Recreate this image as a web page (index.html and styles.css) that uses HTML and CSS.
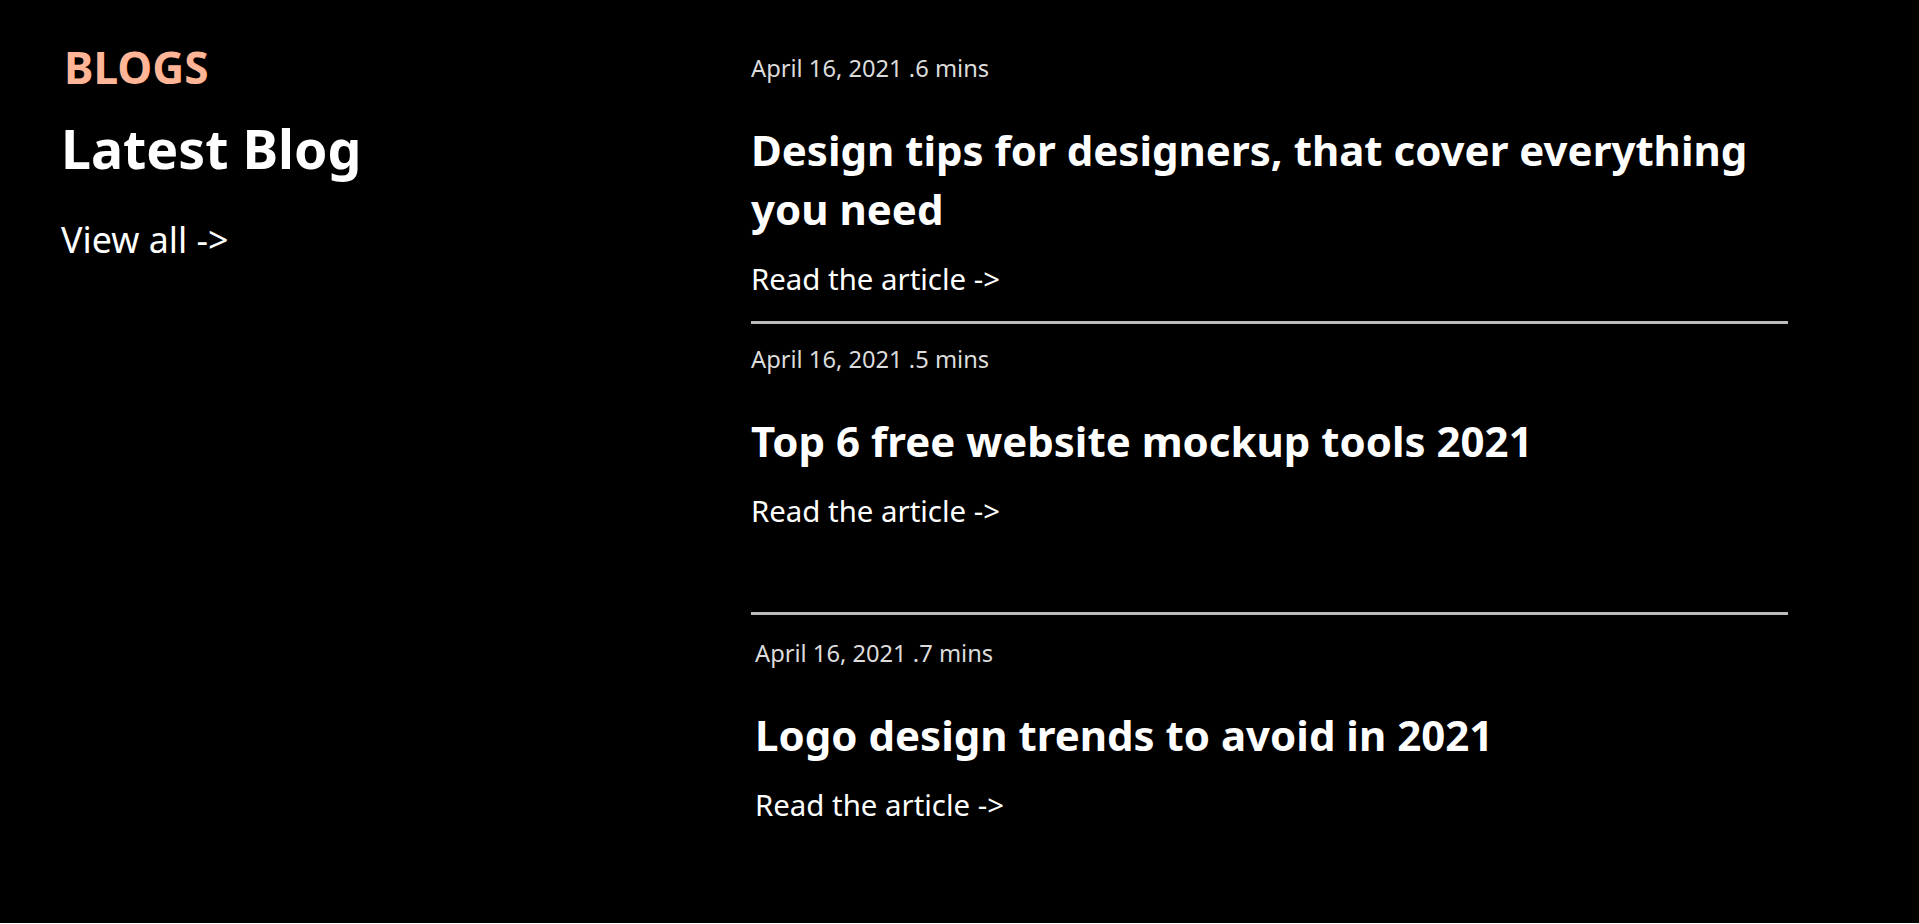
FILE: index.html
```html
<!DOCTYPE html>
<html lang="en">
<head>
<meta charset="utf-8">
<title>Blogs</title>
<link rel="stylesheet" href="styles.css">
</head>
<body>
<section class="blog">
  <div class="intro">
    <p class="eyebrow">BLOGS</p>
    <h2 class="intro-title">Latest Blog</h2>
    <a class="view-all" href="#">View all -&gt;</a>
  </div>
  <div class="posts">
    <article class="post">
      <p class="post-meta">April 16, 2021 .6 mins</p>
      <h3 class="post-title">Design tips for designers, that cover everything you need</h3>
      <a class="post-link" href="#">Read the article -&gt;</a>
    </article>
    <article class="post">
      <p class="post-meta">April 16, 2021 .5 mins</p>
      <h3 class="post-title">Top 6 free website mockup tools 2021</h3>
      <a class="post-link" href="#">Read the article -&gt;</a>
    </article>
    <article class="post post-last">
      <p class="post-meta">April 16, 2021 .7 mins</p>
      <h3 class="post-title">Logo design trends to avoid in 2021</h3>
      <a class="post-link" href="#">Read the article -&gt;</a>
    </article>
  </div>
</section>
</body>
</html>
```
FILE: styles.css
```css
html, body {
  margin: 0;
  padding: 0;
}
body {
  background: #ffffff;
  font-family: "Noto Sans", "Open Sans", sans-serif;
}
.blog {
  background: #000000;
  height: 923px;
  display: flex;
  color: #ffffff;
  overflow: hidden;
}
.intro {
  width: 693px;
  padding: 41px 0 0 58px;
  display: flex;
  flex-direction: column;
  align-items: flex-start;
}
.eyebrow {
  margin: 0 0 0 6px;
  font-size: 44.2px;
  line-height: 52px;
  font-weight: 700;
  color: #ffb596;
}
.intro-title {
  margin: 21px 0 0 3px;
  font-size: 53.6px;
  line-height: 70px;
  font-weight: 700;
}
.view-all {
  margin: 33px 0 0 3px;
  font-size: 35.8px;
  line-height: 44px;
  color: #ffffff;
  text-decoration: none;
}
.posts {
  width: 1037px;
  padding-top: 33px;
}
.post {
  height: 288px;
  border-bottom: 3px solid #bbbbbb;
  display: flex;
  flex-direction: column;
  align-items: flex-start;
}
.post-last {
  border-bottom: none;
  padding: 3px 0 0 4px;
}
.post-meta {
  margin: 20px 0 0;
  font-size: 23.7px;
  line-height: 30px;
  color: #dcdcdc;
}
.post-title {
  margin: 37px 0 0;
  font-size: 42px;
  line-height: 59px;
  font-weight: 700;
}
.post-link {
  margin: 23px 0 0;
  font-size: 29.4px;
  line-height: 36px;
  color: #ffffff;
  text-decoration: none;
}
```
